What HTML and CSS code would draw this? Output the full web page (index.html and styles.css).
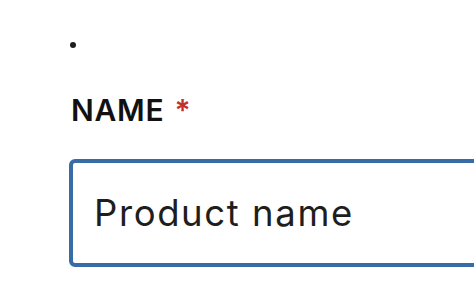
FILE: index.html
```html
<!DOCTYPE html>
<html lang="en">
<head>
<meta charset="utf-8">
<title>Product name</title>
<link rel="stylesheet" href="styles.css">
</head>
<body>
<div class="wrap">
  <div class="dot"></div>
  <label class="label" for="name">NAME <span class="req">*</span></label>
  <input id="name" class="field" type="text" value="Product name">
</div>
</body>
</html>
```
FILE: styles.css
```css
html, body {
  margin: 0;
  padding: 0;
  background: #ffffff;
  overflow: hidden;
}
.wrap {
  display: flex;
  flex-direction: column;
  align-items: flex-start;
  padding: 42px 0 0 70px;
  font-family: Inter, "Liberation Sans", sans-serif;
  color: #1a1a1a;
}
.dot {
  width: 6px;
  height: 6px;
  border-radius: 50%;
  background: #1e1e1e;
}
.label {
  margin-top: 44px;
  margin-left: 1px;
  font-size: 30px;
  font-weight: 600;
  letter-spacing: 0.7px;
  line-height: 36px;
  color: #111111;
}
.req {
  color: #c0322b;
  margin-left: 2px;
}
.field {
  margin-top: 31px;
  margin-left: -1px;
  box-sizing: border-box;
  width: 640px;
  height: 108px;
  padding: 0 21px 0 21px;
  border: 4px solid #376ca6;
  border-radius: 6px;
  background: #ffffff;
  font-family: Inter, "Liberation Sans", sans-serif;
  font-size: 36.5px;
  letter-spacing: 1.6px;
  color: #1e1e1e;
  outline: none;
}
```
